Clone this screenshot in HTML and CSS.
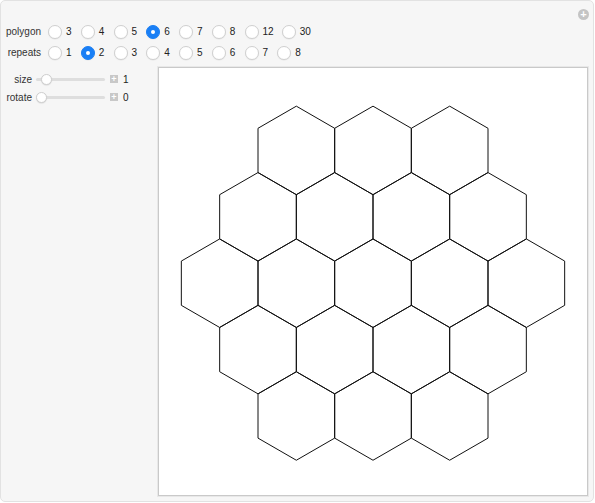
FILE: index.html
```html
<!DOCTYPE html>
<html lang="en">
<head>
    <meta charset="UTF-8">
    <title>Polygon Tiling</title>
    <link rel="stylesheet" href="styles.css">
</head>
<body>
    <div class="panel">
        <div class="topbar">
            <span class="more-icon">+</span>
        </div>

        <div class="radio-row">
            <span class="row-label">polygon</span>
            <span class="radio"></span><span class="opt">3</span>
            <span class="radio"></span><span class="opt">4</span>
            <span class="radio"></span><span class="opt">5</span>
            <span class="radio checked"></span><span class="opt">6</span>
            <span class="radio"></span><span class="opt">7</span>
            <span class="radio"></span><span class="opt">8</span>
            <span class="radio"></span><span class="opt wide">12</span>
            <span class="radio"></span><span class="opt">30</span>
        </div>
        <div class="radio-row">
            <span class="row-label">repeats</span>
            <span class="radio"></span><span class="opt">1</span>
            <span class="radio checked"></span><span class="opt">2</span>
            <span class="radio"></span><span class="opt">3</span>
            <span class="radio"></span><span class="opt">4</span>
            <span class="radio"></span><span class="opt">5</span>
            <span class="radio"></span><span class="opt">6</span>
            <span class="radio"></span><span class="opt">7</span>
            <span class="radio"></span><span class="opt">8</span>
        </div>

        <div class="main">
            <div class="sliders">
                <div class="slider-row">
                    <span class="slider-label">size</span>
                    <span class="track"><span class="thumb thumb-size"></span></span>
                    <span class="plus-box">+</span>
                    <span class="value">1</span>
                </div>
                <div class="slider-row">
                    <span class="slider-label">rotate</span>
                    <span class="track"><span class="thumb thumb-rotate"></span></span>
                    <span class="plus-box">+</span>
                    <span class="value">0</span>
                </div>
            </div>

            <div class="plot">
                <svg width="428" height="427" viewBox="0 0 428 427">
                    <defs>
                        <polygon id="hex" points="0,-44.26 38.33,-22.13 38.33,22.13 0,44.26 -38.33,22.13 -38.33,-22.13"/>
                    </defs>
                    <g class="tiles">
                        <!-- row 1 -->
                        <use href="#hex" x="137.33" y="82.42"/>
                        <use href="#hex" x="214" y="82.42"/>
                        <use href="#hex" x="290.67" y="82.42"/>
                        <!-- row 2 -->
                        <use href="#hex" x="99" y="148.81"/>
                        <use href="#hex" x="175.67" y="148.81"/>
                        <use href="#hex" x="252.33" y="148.81"/>
                        <use href="#hex" x="329" y="148.81"/>
                        <!-- row 3 -->
                        <use href="#hex" x="60.67" y="215.2"/>
                        <use href="#hex" x="137.33" y="215.2"/>
                        <use href="#hex" x="214" y="215.2"/>
                        <use href="#hex" x="290.67" y="215.2"/>
                        <use href="#hex" x="367.33" y="215.2"/>
                        <!-- row 4 -->
                        <use href="#hex" x="99" y="281.59"/>
                        <use href="#hex" x="175.67" y="281.59"/>
                        <use href="#hex" x="252.33" y="281.59"/>
                        <use href="#hex" x="329" y="281.59"/>
                        <!-- row 5 -->
                        <use href="#hex" x="137.33" y="347.98"/>
                        <use href="#hex" x="214" y="347.98"/>
                        <use href="#hex" x="290.67" y="347.98"/>
                    </g>
                </svg>
            </div>
        </div>
    </div>
</body>
</html>
```

FILE: styles.css
```css
/* Reset */
body, div, span {
    margin: 0;
    padding: 0;
}

body {
    font-family: "Liberation Sans", Arial, sans-serif;
    font-size: 10px;
    color: #222;
    background-color: #fff;
}

.panel {
    width: 592px;
    height: 500px;
    border: 1px solid #e2e2e2;
    border-radius: 5px;
    background-color: #f6f6f6;
}

/* Top bar with the little plus icon */
.topbar {
    height: 20px;
    display: flex;
    justify-content: flex-end;
    align-items: flex-start;
    padding-right: 4px;
    box-sizing: border-box;
}

.more-icon {
    margin-top: 8px;
    width: 11px;
    height: 11px;
    border-radius: 50%;
    background-color: #c4c4c4;
    color: #fff;
    font-size: 11px;
    font-weight: bold;
    line-height: 11px;
    text-align: center;
}

/* Radio rows */
.radio-row {
    height: 21px;
    display: flex;
    align-items: center;
}

.row-label {
    width: 40px;
    text-align: right;
    margin-right: 7px;
    color: #333;
}

.radio {
    width: 14px;
    height: 14px;
    box-sizing: border-box;
    border-radius: 50%;
    background-color: #fff;
    border: 1px solid #d0d0d0;
    box-shadow: 0 0.5px 1px rgba(0, 0, 0, 0.08);
    margin-right: 4px;
    position: relative;
}

.radio.checked {
    background-color: #1a7ff5;
    border-color: #1a7ff5;
}

.radio.checked::after {
    content: "";
    position: absolute;
    left: 4px;
    top: 4px;
    width: 4px;
    height: 4px;
    border-radius: 50%;
    background-color: #fff;
}

.opt {
    margin-right: 9.2px;
}

.opt.wide {
    margin-right: 8px;
}

/* Main area: sliders + plot */
.main {
    display: flex;
    margin-top: 4px;
}

.sliders {
    width: 157px;
    padding-top: 3px;
}

.slider-row {
    height: 18px;
    display: flex;
    align-items: center;
}

.slider-label {
    width: 31px;
    text-align: right;
    color: #333;
}

.track {
    width: 69px;
    height: 3px;
    margin-left: 4px;
    border-radius: 2px;
    background-color: #dedede;
    position: relative;
}

.thumb {
    position: absolute;
    top: -4px;
    width: 11px;
    height: 11px;
    box-sizing: border-box;
    border-radius: 50%;
    background-color: #fff;
    border: 1px solid #cfcfcf;
    box-shadow: 0 0.5px 1px rgba(0, 0, 0, 0.12);
}

.thumb-size {
    left: 5px;
}

.thumb-rotate {
    left: 0;
}

.plus-box {
    width: 8px;
    height: 8px;
    margin-left: 5px;
    background-color: #c8c8c8;
    color: #fff;
    font-size: 9px;
    font-weight: bold;
    line-height: 8px;
    text-align: center;
}

.value {
    margin-left: 5px;
}

.plot {
    width: 428px;
    height: 427px;
    border: 1px solid #c9c9c9;
    box-shadow: 0 0 0 1px #e8e8e8;
    background-color: #fff;
}

.plot svg {
    display: block;
}

.tiles use {
    fill: none;
    stroke: #111;
    stroke-width: 1;
}
```
